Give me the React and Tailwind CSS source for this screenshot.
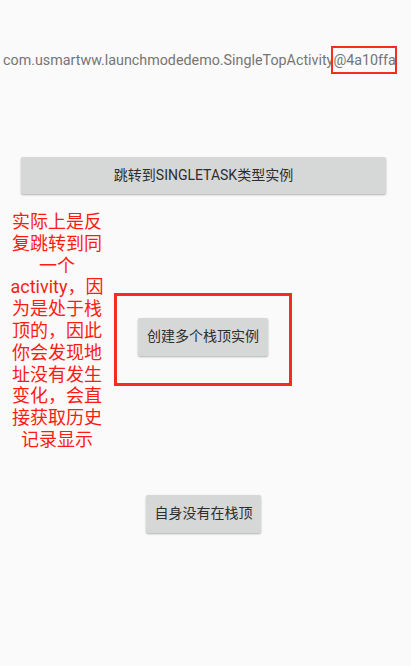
import React from 'react';

const redLines = [
    '实际上是反',
    '复跳转到同',
    '一个',
    'activity，因',
    '为是处于栈',
    '顶的，因此',
    '你会发现地',
    '址没有发生',
    '变化，会直',
    '接获取历史',
    '记录显示',
];

const font = { fontFamily: 'Roboto, "Noto Sans CJK SC", sans-serif' };

const AndroidButton = ({ children, className = '' }) => (
    <button
        className={`flex items-center justify-center bg-[#d6d7d7] rounded-[2px] shadow-[0_1px_2px_rgba(0,0,0,0.3)] text-[14px] text-[#2e2e2e] ${className}`}
    >
        {children}
    </button>
);

export default function App() {
    return (
        <div className="min-h-screen bg-[#fafafa] flex flex-col" style={font}>
            {/* activity name with annotation box */}
            <p className="pt-[50px] pl-[3px] text-[14.3px] leading-[20px] text-[#757575] whitespace-nowrap">
                com.usmartww.launchmodedemo.SingleTopActivity
                <span className="relative">
                    @4a10ffa
                    <span className="absolute -left-[2px] -right-[1px] -top-[6px] -bottom-[6px] border-2 border-[#f52d1f]" />
                </span>
            </p>

            <AndroidButton className="ml-[21px] mt-[87px] w-[365px] h-[37px]">跳转到SINGLETASK类型实例</AndroidButton>

            <div className="flex mt-[17px]">
                <div className="ml-[12px] w-[90px] flex flex-col items-center text-[18px] leading-[21.8px] text-[#ff1a12] whitespace-nowrap">
                    {redLines.map((line) => (
                        <span key={line}>{line}</span>
                    ))}
                </div>

                <div className="ml-[12px] mt-[82px] w-[178px] h-[93px] border-[3px] border-[#f52d1f] flex items-center justify-center pb-[6px]">
                    <AndroidButton className="w-[130px] h-[38px]">创建多个栈顶实例</AndroidButton>
                </div>
            </div>

            <AndroidButton className="mt-[44px] ml-[146px] w-[115px] h-[38px]">自身没有在栈顶</AndroidButton>
        </div>
    );
}
